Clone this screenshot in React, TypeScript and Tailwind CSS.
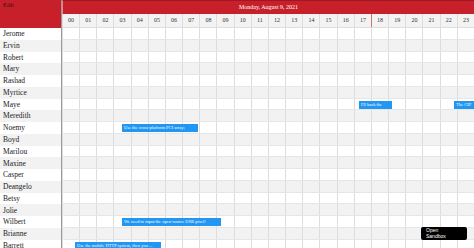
import React from "react";

const HOURS = Array.from({ length: 24 }, (_, i) => String(i).padStart(2, "0"));

const PEOPLE = [
  "Jerome", "Ervin", "Robert", "Mary", "Rashad", "Myrtice", "Maye", "Meredith", "Noemy",
  "Boyd", "Marilou", "Maxine", "Casper", "Deangelo", "Betsy", "Jolie", "Wilbert", "Brianne", "Barrett",
];

// start / end in hours
const EVENTS: Record<string, { start: number; end: number; title: string }[]> = {
  Maye: [
    { start: 17.3, end: 19.25, title: "I'll back the" },
    { start: 22.85, end: 25, title: "The GIF" },
  ],
  Noemy: [{ start: 3.49, end: 7.9, title: "Use the cross-platform PCI array;" }],
  Wilbert: [{ start: 3.49, end: 9.27, title: "We need to input the open-source USB pixel!" }],
  Barrett: [{ start: 0.76, end: 5.76, title: "Use the mobile HTTP system, then you ..." }],
};

export default function App() {
  return (
    <div className="relative w-[474px] h-[248px] overflow-hidden bg-white font-['Liberation_Serif',serif] text-[#222]">
      {/* Header */}
      <div className="flex h-[28px]">
        <div className="w-[62px] shrink-0 bg-[#c8202a] border-r border-[#999] text-[6.5px] text-[#3a1010] px-[3px] pt-[2px] leading-none">
          Edit
        </div>
        <div className="flex-1 flex flex-col">
          <div className="h-[14px] bg-[#c8202a] border-l border-[#e88] flex items-center justify-center text-white text-[6px] border-t border-t-[#a0181f]">
            Monday, August 9, 2021
          </div>
          <div className="flex-1 grid grid-cols-24 bg-[#f3f3f3] border-b border-[#ddd]">
            {HOURS.map((h) => (
              <div
                key={h}
                className={`flex items-center justify-center text-[6px] text-[#333] border-l ${
                  h === "18" ? "border-[#d07070]" : "border-[#ddd]"
                }`}
              >
                {h}
              </div>
            ))}
          </div>
        </div>
      </div>

      {/* Rows */}
      {PEOPLE.map((name, idx) => (
        <div key={name} className={`flex h-[11.78px] ${idx % 2 === 1 ? "bg-[#f2f2f2]" : "bg-white"}`}>
          <div className="w-[62px] shrink-0 border-r border-[#999] text-[7.5px] leading-none px-[3px] flex items-center">
            {name}
          </div>
          <div className="relative flex-1 grid grid-cols-24 border-b border-[#e6e6e6]">
            {HOURS.map((h) => (
              <div key={h} className="border-l border-[#ddd]" />
            ))}
            {(EVENTS[name] || []).map((ev) => (
              <div
                key={ev.title}
                className="absolute top-[2px] h-[8px] bg-[#2196f3] text-white text-[4.5px] leading-[8px] px-[2px] overflow-hidden whitespace-nowrap"
                style={{ left: `${(ev.start / 24) * 100}%`, width: `${((ev.end - ev.start) / 24) * 100}%` }}
              >
                {ev.title}
              </div>
            ))}
          </div>
        </div>
      ))}

      {/* Sandbox button */}
      <div className="absolute right-[7px] bottom-[8px] w-[46px] h-[13px] bg-black rounded-[2px] text-white text-[5px] leading-[5.5px] font-['Liberation_Sans',sans-serif] px-[5px] pt-[1px]">
        Open
        <br />
        Sandbox
      </div>
    </div>
  );
}
